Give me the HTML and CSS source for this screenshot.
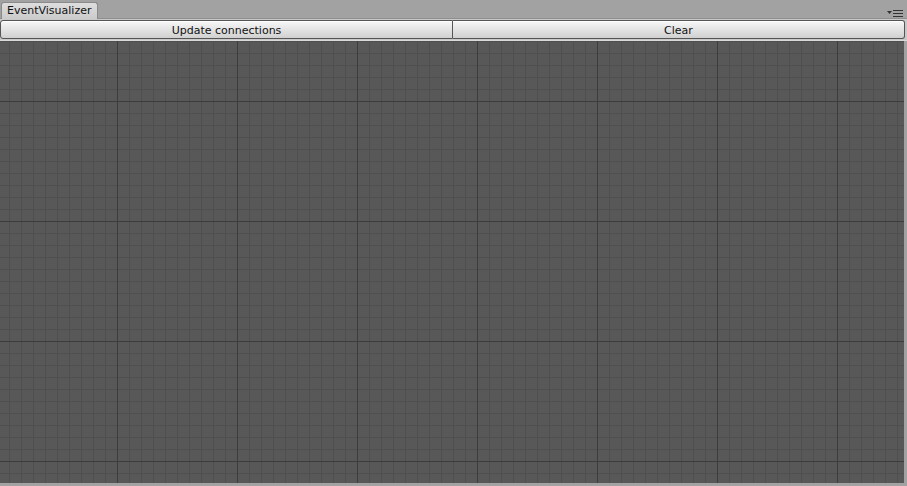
FILE: index.html
```html
<!DOCTYPE html>
<html>
<head>
<meta charset="utf-8">
<link rel="stylesheet" href="styles.css">
</head>
<body>
<div class="window">
  <div class="tabbar">
    <div class="tab">EventVisualizer</div>
    <div class="menu">
      <svg width="16" height="8" viewBox="0 0 16 8">
        <path d="M0 2 L5 2 L2.5 5 Z" fill="#333"/>
        <rect x="6" y="1" width="10" height="1" fill="#333"/>
        <rect x="6" y="4" width="10" height="1" fill="#333"/>
        <rect x="6" y="7" width="10" height="1" fill="#333"/>
      </svg>
    </div>
  </div>
  <div class="toolbar">
    <button class="btn btn-left">Update connections</button>
    <button class="btn btn-right">Clear</button>
  </div>
  <div class="canvas"></div>
</div>
</body>
</html>
```

FILE: styles.css
```css
html, body {
  margin: 0;
  padding: 0;
}
body {
  background: #a2a2a2;
  font-family: "DejaVu Sans", "Liberation Sans", sans-serif;
  font-size: 11px;
  color: #111;
  width: 907px;
  height: 486px;
  overflow: hidden;
}
.window {
  display: flex;
  flex-direction: column;
  height: 486px;
}
.tabbar {
  position: relative;
  height: 19px;
  display: flex;
  align-items: flex-end;
  padding-left: 1px;
  background: #a2a2a2;
  border-bottom: 1px solid #8e8e8e;
  box-sizing: border-box;
}
.tab {
  line-height: 16px;
  padding: 0 6px 0 5px;
  background: linear-gradient(#dedede, #cbcbcb);
  border: 1px solid #8a8a8a;
  border-bottom: none;
  border-radius: 3px 3px 0 0;
  box-sizing: border-box;
  height: 17px;
  margin-bottom: -1px;
}
.menu {
  position: absolute;
  right: 4px;
  top: 9px;
  line-height: 0;
}
.toolbar {
  display: flex;
  height: 22px;
  box-sizing: border-box;
  padding: 1px 2px 1px 0;
  background: #c9c9c9;
  border-bottom: 1px solid #d9d9d9;
}
.btn {
  font-family: inherit;
  font-size: 11px;
  color: #111;
  flex: 1;
  height: 19px;
  margin: 0;
  padding: 1px 0 0 0;
  border: 1px solid #555;
  background: linear-gradient(#f7f7f7, #e6e6e6 45%, #d0d0d0);
  box-shadow: inset 0 1px 0 #fff;
}
.btn-left {
  border-radius: 3px 0 0 3px;
}
.btn-right {
  border-left: none;
  border-radius: 0 3px 3px 0;
}
.canvas {
  flex: 1;
  margin: 0 3px 3px 0;
  background-color: #585858;
  background-image:
    linear-gradient(to right, #3c3c3c 1px, transparent 1px),
    linear-gradient(to bottom, #3c3c3c 1px, transparent 1px),
    linear-gradient(to right, #4f4f4f 1px, transparent 1px),
    linear-gradient(to bottom, #4f4f4f 1px, transparent 1px);
  background-size: 120px 120px, 120px 120px, 12px 12px, 12px 12px;
  background-position: 117px 0, 0 60px, 9px 0, 0 0;
}
```
